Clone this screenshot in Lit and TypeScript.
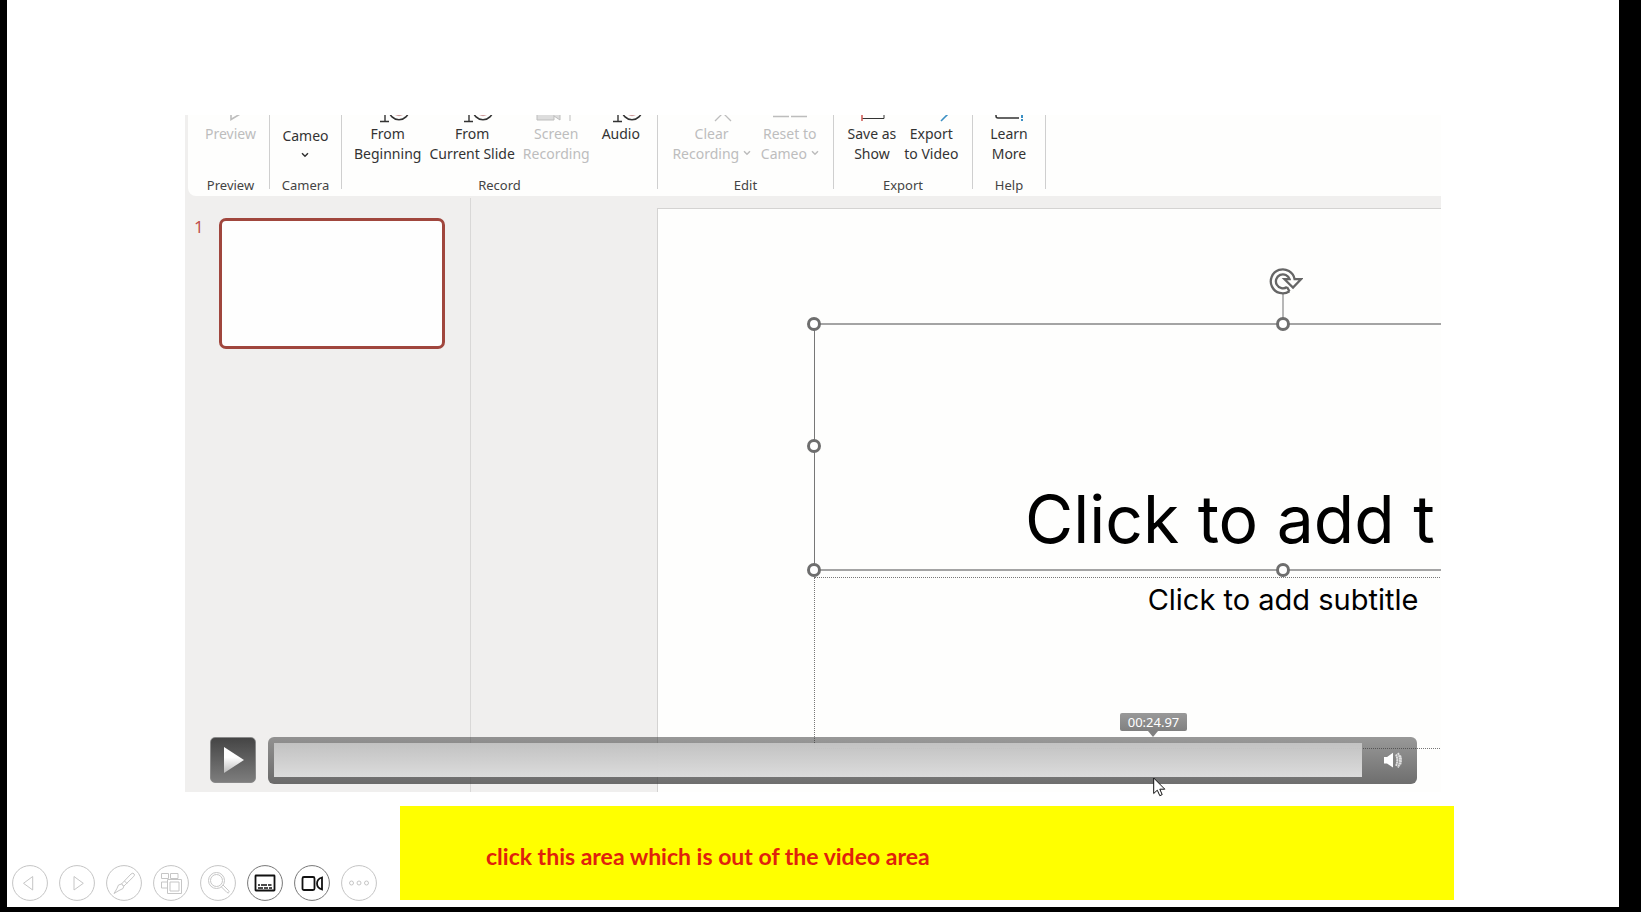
import { LitElement, html, css, svg, nothing, type TemplateResult } from "lit";
import { customElement, property, state } from "lit/decorators.js";

interface Tool {
  lines: string[];
  icon: TemplateResult | typeof nothing;
  disabled?: boolean;
  menu?: boolean;
  low?: boolean;
}
interface Group {
  name: string;
  key: string;
  tools: Tool[];
}

const chevron = html`<svg class="chevron" viewBox="0 0 8 6" aria-hidden="true"><path d="M1 1.2 4 4.2 7 1.2" /></svg>`;

const recordIcon = svg`<path d="M8 6.5H17" stroke-width="1.6"/><circle cx="27" cy="-5" r="9.8" stroke-width="1.6"/><circle cx="27" cy="-5" r="5.2" fill="#c88" stroke="none"/><path d="M23 -.5Q27 2 31 -.5" stroke="#c99" stroke-width="1"/><path d="M13 -4V6.500" stroke-width="1.400"/>`;
const previewIcon = svg`<path d="M16 -6V4.5L26 -1.5" stroke-width="1.6"/>`;
const screenIcon = svg`<path d="M-3 -4H14V5H-3ZM14 1 20 5V-3" fill="#ddd"/><path d="M30 -4V6"/>`;
const clearIcon = svg`<path d="M19 6 27 -2 35 6" stroke-width="1.3"/>`;
const resetIcon = svg`<path d="M-1 1.5H15M17 1.5H33" stroke-width="1.4"/>`;
const saveIcon = svg`<path d="M6 3.5H28V-3" /><path d="M6 -3V6" stroke="#d0605a" stroke-width="1.6"/>`;
const exportIcon = svg`<path d="M26 6 33 -1" stroke="#3b8fc4" stroke-width="1.6"/>`;
const learnIcon = svg`<path d="M3 -3V1Q3 3 5 3H26" stroke-width="1.5"/><path d="M29 0V6" stroke="#3b8fc4" stroke-width="2" stroke-dasharray="3 1"/>`;

const groups: Group[] = [
  { name: "Preview", key: "preview", tools: [{ lines: ["Preview"], icon: previewIcon, disabled: true }] },
  { name: "Camera", key: "camera", tools: [{ lines: ["Cameo"], icon: nothing, menu: true, low: true }] },
  {
    name: "Record",
    key: "record",
    tools: [
      { lines: ["From", "Beginning"], icon: recordIcon },
      { lines: ["From", "Current Slide"], icon: recordIcon },
      { lines: ["Screen", "Recording"], icon: screenIcon, disabled: true },
      { lines: ["Audio"], icon: recordIcon },
    ],
  },
  {
    name: "Edit",
    key: "edit",
    tools: [
      { lines: ["Clear", "Recording"], icon: clearIcon, disabled: true, menu: true },
      { lines: ["Reset to", "Cameo"], icon: resetIcon, disabled: true, menu: true },
    ],
  },
  {
    name: "Export",
    key: "export",
    tools: [
      { lines: ["Save as", "Show"], icon: saveIcon },
      { lines: ["Export", "to Video"], icon: exportIcon },
    ],
  },
  { name: "Help", key: "help", tools: [{ lines: ["Learn", "More"], icon: learnIcon }] },
];

@customElement("record-ribbon")
class RecordRibbon extends LitElement {
  static styles = css`
    :host { display: flex; height: 81px; box-sizing: border-box; margin-left: 3px; padding-bottom: 7px; overflow: hidden;
      background: #fefefd; border-radius: 0 0 0 8px; font-family: "Noto Sans", sans-serif; color: #333; }
    .group { box-sizing: border-box; display: flex; flex-direction: column; justify-content: space-between; flex: none;
      border-right: 1px solid #cfcfcf; }
    .preview { width: 82px; padding-left: 4px; }
    .camera { width: 72px; }
    .record { width: 316px; }
    .edit { width: 176px; }
    .export { width: 139px; }
    .help { width: 73px; }
    .tools { display: flex; justify-content: center; gap: 8px; }
    .record .tools { justify-content: flex-start; padding-left: 12px; }
    .record button:last-child { margin-left: 4px; }
    .edit .tools { gap: 10px; }
    button { display: flex; flex-direction: column; align-items: center; margin: 0; padding: 0; border: 0;
      background: none; font: inherit; font-size: 14px; line-height: 20px; color: #333; white-space: nowrap; }
    button:disabled { color: #bdbdbd; }
    .low { padding-top: 2px; }
    .icon { width: 32px; height: 9px; fill: none; stroke: currentColor; overflow: visible; }
    .chevron { width: 8px; height: 6px; fill: none; stroke: currentColor; stroke-width: 1.5; vertical-align: 3px; }
    h2 { margin: 0 0 -2px; font-size: 13px; line-height: 12px; font-weight: 400; text-align: center; color: #444; }
  `;

  private tool(t: Tool) {
    const last = t.lines.length - 1;
    return html`<button type="button" class=${t.low ? "low" : ""} ?disabled=${!!t.disabled}>
      <svg class="icon" viewBox="0 0 32 9" aria-hidden="true">${t.icon}</svg>
      ${t.lines.map((l, i) => html`<span>${l}${t.menu && last > 0 && i === last ? html` ${chevron}` : nothing}</span>`)}
      ${t.menu && last === 0 ? html`<span>${chevron}</span>` : nothing}
    </button>`;
  }

  render() {
    return groups.map(
      (g) => html`<section class="group ${g.key}">
        <div class="tools">${g.tools.map((t) => this.tool(t))}</div>
        <h2>${g.name}</h2>
      </section>`,
    );
  }
}

@customElement("slide-editor")
class SlideEditor extends LitElement {
  static styles = css`
    :host { display: grid; grid-template-columns: 286px 186px minmax(0, 1fr); background: #f0efee; min-height: 0; flex: 1;
      font-family: Inter, sans-serif; }
    .thumbs { display: flex; align-items: flex-start; gap: 15px; margin-top: 2px; padding: 20px 0 0 9px;
      border-right: 1px solid #d9d8d7; font: 17px/18px "Noto Sans", sans-serif; color: #c0504d; }
    .thumb { width: 226px; height: 131px; box-sizing: border-box; padding: 0; border: 3px solid #a0463d; border-radius: 7px; background: #fefefe; }
    .canvas { position: relative; margin-top: 12px; border: 1px solid #d4d3d2; border-width: 1px 0 0 1px; background: #fefefd; overflow: hidden; }
    .box { position: absolute; left: 156px; width: 938px; box-sizing: border-box; color: #000; }
    .title { top: 114px; height: 248px; border: solid #a4a4a4; border-width: 2px 1px; border-left-color: #777; display: flex; align-items: flex-end; }
    .title h1 { margin: 0; font-size: 66px; line-height: 80px; padding: 0 0 10px 210px; font-weight: 400; white-space: nowrap; }
    .sub { top: 368px; height: 172px; border: 1px dotted #777; padding-top: 4px; text-align: center; }
    .sub p { margin: 0; font-size: 29px; line-height: 36px; }
    .grip { position: absolute; width: 14px; height: 14px; box-sizing: border-box; border: 3px solid #6e6e6e; border-radius: 50%; background: #fff; }
    .nw { left: -8px; top: -8px; }
    .n { left: calc(50% - 7px); top: -8px; }
    .w { left: -8px; top: calc(50% - 8px); }
    .sw { left: -8px; bottom: -8px; }
    .s { left: calc(50% - 7px); bottom: -8px; }
    .rotate { position: absolute; left: calc(50% - 14px); top: -58px; width: 34px; height: 52px; fill: none; stroke: #666; }
  `;

  render() {
    return html`
      <aside class="thumbs"><span>1</span><button class="thumb" type="button" aria-label="Slide 1"></button></aside>
      <div></div>
      <main class="canvas">
        <div class="box sub"><p>Click to add subtitle</p></div>
        <div class="box title">
          <h1>Click to add t</h1>
          <svg class="rotate" viewBox="0 0 34 52" aria-hidden="true">
            <path d="M14 27V52" stroke="#999" stroke-width="1.4" />
            <path d="M20.5 24.3A12 12 0 1 1 25.6 12.2H32L24 20.5 15.5 12.2H20.6A7 7 0 1 0 18 20" stroke-width="2.3" />
            <path d="M18 20 20.5 24.3" stroke-width="2.3" />
          </svg>
          <span class="grip nw"></span><span class="grip n"></span><span class="grip w"></span>
          <span class="grip sw"></span><span class="grip s"></span>
        </div>
      </main>`;
  }
}

@customElement("media-controls")
class MediaControls extends LitElement {
  @property() time = "00:24.97";
  @state() private position = 0;

  static styles = css`
    :host { display: flex; gap: 12px; font-family: "Noto Sans", sans-serif; }
    button { padding: 0; border: 0; background: none; }
    svg { display: block; }
    .play { width: 46px; height: 46px; border: 1px solid #8a8a8a; border-radius: 5px; background: linear-gradient(#454545, #7d7d7d);
      display: grid; place-items: center; padding-left: 2px; }
    .bar { position: relative; flex: 1; display: flex; height: 47px; box-sizing: border-box; padding: 6px 0 7px 6px; border-radius: 6px;
      background: linear-gradient(rgba(60, 60, 60, 0.52), rgba(60, 60, 60, 0.74)); }
    .seek { appearance: none; flex: 1; min-width: 0; margin: 0; height: 34px; background: linear-gradient(rgba(198, 198, 198, 0.93), rgba(224, 224, 224, 0.96)); }
    .seek::-webkit-slider-thumb { appearance: none; width: 1px; height: 1px; background: transparent; }
    .volume { width: 55px; display: grid; place-items: center; padding-left: 6px; }
    .tip { position: absolute; left: 852px; top: -24px; width: 67px; height: 18px; border-radius: 2px; color: #fff;
      background: linear-gradient(#999, #808080); font-size: 13px; line-height: 18px; text-align: center; }
    .tip::after { content: ""; position: absolute; left: 28px; top: 18px; border: 5px solid transparent; border-top: 6px solid #808080; border-bottom: 0; }
    .cursor { position: absolute; left: 885px; top: 40px; }
  `;

  render() {
    return html`
      <button class="play" type="button" aria-label="Play">
        <svg width="22" height="28" viewBox="0 0 22 28">
          <defs><linearGradient id="shine" x1="0" y1="0" x2="0" y2="1"><stop offset=".4" stop-color="#fff" /><stop offset="1" stop-color="#bbb" /></linearGradient></defs>
          <path d="M1 1 21 14 1 27Z" fill="url(#shine)" />
        </svg>
      </button>
      <div class="bar">
        <input class="seek" type="range" min="0" max="100" .value=${String(this.position)} aria-label="Seek"
          @input=${(e: Event) => (this.position = Number((e.target as HTMLInputElement).value))} />
        <button class="volume" type="button" aria-label="Mute">
          <svg width="18" height="17" viewBox="0 0 18 17">
            <path d="M0 5H3L9 .8V15.5L3 11.5H0Z" fill="#fff" />
            <path d="M12 2.5Q14.500 8 12 14M14 1Q17.500 8 14 15.500M16 3.500Q18 8 16 13" fill="none" stroke="#e0e0e0" stroke-width="1.9" stroke-dasharray="2 .4" />
          </svg>
        </button>
        <output class="tip">${this.time}</output>
        <svg class="cursor" width="13" height="20" viewBox="0 0 13 20" aria-hidden="true">
          <path d="M.7 1V16.500L4.300 13.200 6.800 18.700 9.200 17.600 6.800 12.200H11.800Z" fill="#fff" stroke="#111" />
        </svg>
      </div>`;
  }
}

const showTools: { label: string; active?: boolean; art: TemplateResult }[] = [
  { label: "Previous", art: svg`<path d="M20.700 11.500V25L11.500 18.300Z"/>` },
  { label: "Next", art: svg`<path d="M15 11.500V25L24.300 18.300Z"/>` },
  {
    label: "Pen",
    art: svg`<path d="M15.500 19 25 9Q27.200 7.200 28.200 9 29 10.300 27.500 11.700L17.800 21.200ZM15.500 19 17.800 21.200 17 23.500 13 25.500 8 28.500 10.800 23.800 12.500 20ZM18.500 16 21 18.500"/>`,
  },
  {
    label: "All slides",
    art: svg`<path d="M14.500 23H8.500V17H14.500M8.500 8.500H15.500V13.500H8.500ZM17.500 8.500H25V13.500H17.500Z"/><path d="M14.500 14.500H28.500V28.500H14.500ZM17 17H26V26H17Z"/>`,
  },
  {
    label: "Zoom",
    art: svg`<circle cx="16.500" cy="15.500" r="8"/><circle cx="16.500" cy="15.500" r="6"/><path d="M21.500 22 27 27.500Q28.500 28.500 29 27.300 29.500 26.300 28.300 25.300L23 20"/>`,
  },
  {
    label: "Subtitles",
    active: true,
    art: svg`<rect x="8.500" y="10.500" width="19" height="15" rx=".5" stroke-width="1.8"/><path d="M11 20H13M14 20H20M21 20H24.500M11 23H16M17 23H21M22 23H25" stroke-width="1.4"/>`,
  },
  {
    label: "Camera",
    active: true,
    art: svg`<rect x="8.500" y="12" width="12" height="13" rx="1.500" stroke-width="1.8"/><path d="M28 12.500Q23 14 23 18.500 23 23 28 24.500Z" stroke-width="1.8"/>`,
  },
  {
    label: "More",
    art: svg`<circle cx="10.500" cy="18" r="2"/><circle cx="18" cy="18" r="2"/><circle cx="25.500" cy="18" r="2"/>`,
  },
];

@customElement("show-toolbar")
class ShowToolbar extends LitElement {
  static styles = css`
    :host { display: flex; gap: 11px; }
    button { width: 36px; height: 36px; flex: none; box-sizing: border-box; padding: 0; border: 0; background: none; color: #c6c6c6; }
    svg { display: block; width: 36px; height: 36px; fill: none; stroke: currentColor; }
    .active { color: #111; }
    .ring { stroke: #c4c4c4; }
    .active .ring { stroke: #777; }
  `;

  render() {
    return showTools.map(
      (t) => html`<button type="button" class=${t.active ? "active" : ""} aria-label=${t.label}>
        <svg viewBox="0 0 36 36"><circle class="ring" cx="18" cy="18" r="17.400" />${t.art}</svg>
      </button>`,
    );
  }
}

@customElement("app-root")
export class AppRoot extends LitElement {
  static styles = css`
    :host { display: block; background: #000; }
    .show { display: flex; flex-direction: column; gap: 14px; box-sizing: border-box; min-height: 100vh; padding-top: 115px; padding-bottom: 6px;
      border: solid #000; border-width: 0 22px 5px 7px; background: #fff; }
    .video { position: relative; flex: 1; display: flex; flex-direction: column; margin: 0 178px; background: #f0efee; }
    .controls { position: absolute; left: 25px; right: 24px; bottom: 8px; }
    .footer { display: flex; align-items: flex-end; gap: 23px; padding: 0 165px 0 5px; }
    .note { flex: 1; display: flex; align-items: center; box-sizing: border-box; height: 94px; margin: 0 0 1px; padding: 6px 0 0 86px; background: #ff0;
      color: #e0220c; font: 700 23px/28px Lato, sans-serif; }
  `;

  render() {
    return html`<div class="show">
      <section class="video">
        <record-ribbon></record-ribbon>
        <slide-editor></slide-editor>
        <media-controls class="controls"></media-controls>
      </section>
      <footer class="footer">
        <show-toolbar></show-toolbar>
        <p class="note">click this area which is out of the video area</p>
      </footer>
    </div>`;
  }
}
